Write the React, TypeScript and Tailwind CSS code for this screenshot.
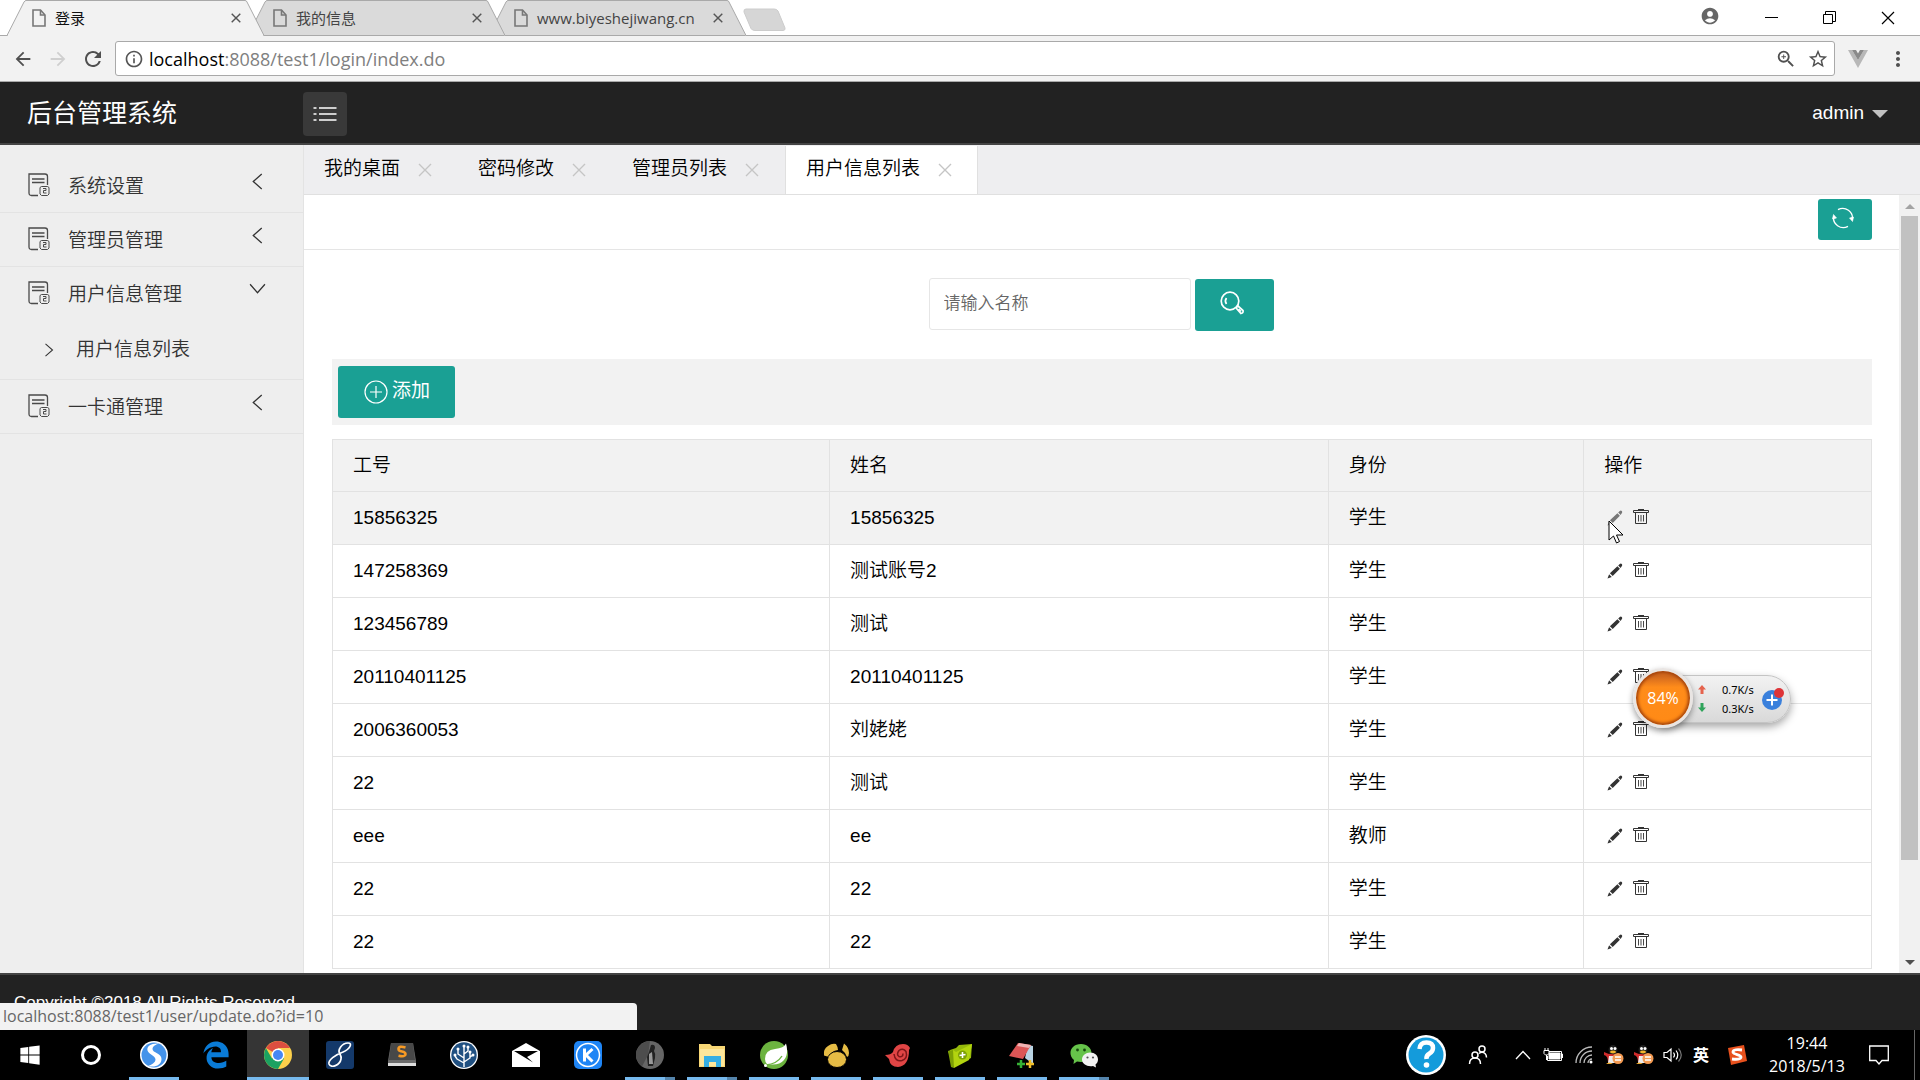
import React, { useState } from 'react';
import {
  MdAccountCircle,
  MdArrowBack,
  MdArrowForward,
  MdInfoOutline,
  MdMoreVert,
  MdRefresh,
  MdStarBorder,
  MdZoomIn,
} from 'react-icons/md';
import { FaEdgeLegacy, FaWindows } from 'react-icons/fa6';

interface User {
  no: string;
  name: string;
  role: string;
}

const users: User[] = [
  { no: '15856325', name: '15856325', role: '学生' },
  { no: '147258369', name: '测试账号2', role: '学生' },
  { no: '123456789', name: '测试', role: '学生' },
  { no: '20110401125', name: '20110401125', role: '学生' },
  { no: '2006360053', name: '刘姥姥', role: '学生' },
  { no: '22', name: '测试', role: '学生' },
  { no: 'eee', name: 'ee', role: '教师' },
  { no: '22', name: '22', role: '学生' },
  { no: '22', name: '22', role: '学生' },
];

const browserTabs = [
  { title: '登录', className: 'z-30' },
  { title: '我的信息', className: 'z-20 -ml-4' },
  { title: 'www.biyeshejiwang.cn', className: 'z-10 -ml-4' },
];

const pageTabs = ['我的桌面', '密码修改', '管理员列表', '用户信息列表'];

/* ---------- icons ---------- */

function PageIcon({ className }: { className?: string }) {
  return (
    <svg viewBox="0 0 14 18" className={className} fill="none" stroke="currentColor" strokeWidth="1.6">
      <path d="M1 1h7.500l4.500 5v11H1z" />
      <path d="M8.500 1v5H13" />
    </svg>
  );
}

function CloseIcon({ className, strokeWidth = 2 }: { className?: string; strokeWidth?: number }) {
  return (
    <svg viewBox="0 0 14 14" className={className} fill="none" stroke="currentColor" strokeWidth={strokeWidth}>
      <path d="M1 1l12 12M13 1L1 13" />
    </svg>
  );
}

function Chevron({ className }: { className?: string }) {
  return (
    <svg viewBox="0 0 16 16" className={className} fill="none" stroke="currentColor" strokeWidth="1.2">
      <path d="M12 1L4 8l8 7" />
    </svg>
  );
}

function MenuDocIcon() {
  return (
    <svg viewBox="0 0 22 24" className="h-6 w-[22px] shrink-0" fill="none" stroke="#4a4a4a" strokeWidth="1.3">
      <path d="M10 22.500H3.500Q1 22.500 1 20V1h16q2.500 0 2.500 2.500V12" />
      <path d="M4 6h12.500M4 9.500h12.500" />
      <path d="M12 14.500l1.500-1h6l1.500 1v6.500l-1.500 1.500h-6L12 21z" strokeWidth="1" />
      <path d="M15 15.500h3v2h-2.500v2.500h3" strokeWidth="1" />
    </svg>
  );
}

function RefreshIcon() {
  return (
    <svg viewBox="0 0 22 22" className="size-[22px]" fill="none" stroke="currentColor" strokeWidth="1.3">
      <path d="M6 2.600A9.800 9.800 0 0 1 20.300 13M16 19.400A9.800 9.800 0 0 1 1.700 9" />
      <path d="M17.500 11l3 3.500 1-4.500zM4.500 11l-3-3.500-1 4.500z" fill="currentColor" strokeWidth="0.6" />
    </svg>
  );
}

function SearchIcon() {
  return (
    <svg viewBox="0 0 24 24" className="size-6" fill="none" stroke="currentColor" strokeWidth="1.7">
      <circle cx="10" cy="10" r="8.800" />
      <path d="M6.500 13a5 5 0 0 1 0-6" />
      <path d="M16.500 16.500l1.500-1.500 5 4.500q.6 2.500-2 3l-4.500-5z" />
      <path d="M18.500 18l2.500 2.500" />
    </svg>
  );
}

function AddIcon() {
  return (
    <svg viewBox="0 0 24 24" className="size-6" fill="none" stroke="currentColor" strokeWidth="1.2">
      <circle cx="12" cy="12" r="11" />
      <path d="M12 6v12M6 12h12" />
    </svg>
  );
}

function PencilIcon() {
  return (
    <svg viewBox="0 0 16 16" className="size-4" fill="currentColor">
      <path d="M.5 15.500l1.600-4.300 2.700 2.700zM2.900 10.300l7.500-7 2.500 2.500-7.200 7.300zM11.200 2.500l1.600-1.500q1.200-.8 2 .1.900 1 .1 2L13.600 5z" />
    </svg>
  );
}

function TrashIcon() {
  return (
    <svg viewBox="0 0 16 16" className="size-4" fill="none" stroke="currentColor" strokeWidth="1">
      <path d="M5 .5h6M.5 1.500h15v2H.5zM2.500 4v10.500h11V4" />
      <path d="M5.500 6v6.500M8 6v6.500M10.500 6v6.500" strokeWidth="0.900" />
    </svg>
  );
}

/* ---------- browser chrome ---------- */

function BrowserTabs() {
  return (
    <div className="flex h-[35px] bg-white pl-[7px] font-['Open_Sans','Noto_Sans_CJK_SC',sans-serif] text-[15px] font-normal">
      {browserTabs.map((tab, i) => (
        <div key={tab.title} className={`relative flex h-9 w-[257px] shrink-0 items-center pr-[23px] pl-[25px] ${tab.className}`}>
          <svg viewBox="0 0 257 36" className="absolute inset-0 h-9 w-[257px]">
            <path
              d="M0 35.500L17 2q1-1.500 2-1.500h219q1.500 0 2 1.500l17 33.500"
              fill={i === 0 ? '#f2f2f2' : '#dadada'}
              stroke="#a9a9a9"
            />
            <path d="M1 35.500h255" stroke={i === 0 ? '#f2f2f2' : '#a9a9a9'} />
          </svg>
          <PageIcon className="relative h-[18px] w-[14px] shrink-0 text-[#777]" />
          <span className={`relative ml-[9px] flex-1 whitespace-nowrap ${i === 0 ? 'text-[#111]' : 'text-[#444]'}`}>{tab.title}</span>
          <button aria-label="关闭标签页" className="relative text-[#555]">
            <CloseIcon className="size-[10px]" />
          </button>
        </div>
      ))}
      <button aria-label="新标签页" className="mt-2 h-6 w-11 -translate-x-[3px]">
        <svg viewBox="0 0 44 24">
          <path d="M3 1h28q3 0 4 2l7 17q.5 2.500-2 2.500H12q-3 0-4-2L1 4Q.5 1 3 1z" fill="#d6d6d6" stroke="#ccc" />
        </svg>
      </button>
      <div className="ml-auto flex items-center">
        <MdAccountCircle className="mr-[45px] mb-1 size-5 text-[#666]" />
        <button aria-label="最小化" className="mr-[45px]">
          <svg viewBox="0 0 13 13" className="size-[13px]" stroke="#000">
            <path d="M0 6.500h13" />
          </svg>
        </button>
        <button aria-label="还原" className="mr-[45px]">
          <svg viewBox="0 0 13 13" className="size-[13px]" fill="none" stroke="#000">
            <path d="M.5 3.500h9v9h-9zM2.500 3V.5h10v10H10" />
          </svg>
        </button>
        <button aria-label="关闭" className="mr-[25px]">
          <CloseIcon className="size-[14px]" strokeWidth={1.2} />
        </button>
      </div>
    </div>
  );
}

function AddressBar() {
  return (
    <div className="flex h-[47px] items-center border-t border-b border-[#a9a9a9] bg-[#f2f2f2] pl-3 font-['Open_Sans',sans-serif] font-normal">
      <button aria-label="后退" className="text-[#505050]"><MdArrowBack className="size-[22px]" /></button>
      <button aria-label="前进" className="ml-[13px] text-[#cfcfcf]"><MdArrowForward className="size-[22px]" /></button>
      <button aria-label="重新加载" className="ml-3 text-[#505050]"><MdRefresh className="size-6" /></button>
      <div className="ml-[10px] flex h-[35px] flex-1 items-center rounded-[3px] border border-[#a9a9a9] bg-white pr-[5px] pl-2">
        <MdInfoOutline className="size-5 text-[#555]" />
        <div className="ml-[5px] flex-1 text-lg text-[#808080]">
          <span className="text-black">localhost</span>:8088/test1/login/index.do
        </div>
        <button aria-label="缩放" className="text-[#505050]"><MdZoomIn className="size-[22px]" /></button>
        <button aria-label="收藏" className="ml-[10px] text-[#505050]"><MdStarBorder className="size-[22px]" /></button>
      </div>
      <svg viewBox="0 0 20 18" className="ml-[13px] h-[18px] w-5">
        <path d="M0 0h4l6 10 6-10h4L10 18z" fill="#b8b8b8" />
        <path d="M4 0h4l2 3.500L12 0h4l-6 10z" fill="#8a8a8a" />
      </svg>
      <button aria-label="菜单" className="mr-[10px] ml-[18px] text-[#505050]"><MdMoreVert className="size-6" /></button>
    </div>
  );
}

/* ---------- admin page ---------- */

function Header() {
  return (
    <header className="flex h-[63px] shrink-0 items-center border-b-2 border-[#444] bg-[#222] pt-[2px] text-white">
      <h1 className="w-[303px] pl-[27px] text-[25px] font-normal">后台管理系统</h1>
      <button aria-label="展开菜单" className="flex size-11 items-center justify-center rounded bg-[#393939]">
        <svg viewBox="0 0 24 16" className="h-4 w-6" stroke="#fff" strokeWidth="1.6">
          <path d="M6 2h17.500M6 8h17.500M6 14h17.500M.5 2h3M.5 8h3M.5 14h3" />
        </svg>
      </button>
      <button className="mr-8 ml-auto flex items-center gap-2 text-[19px]">
        admin
        <span className="border-x-8 border-t-8 border-x-transparent border-t-[#c2c2c2]" />
      </button>
    </header>
  );
}

interface MenuItemProps {
  title: string;
  open?: boolean;
  children?: React.ReactNode;
}

function MenuItem({ title, open, children }: MenuItemProps) {
  return (
    <li className="border-b border-[#e3e3e3]">
      <button className="flex h-[53px] w-full items-center pr-[37px] pb-px pl-7 text-[19px] text-[#333]">
        <MenuDocIcon />
        <span className="mt-1 ml-[18px] flex-1 text-left">{title}</span>
        <Chevron className={open ? 'mb-[9px] size-[17px] -rotate-90' : 'mb-[7px] size-[17px]'} />
      </button>
      {children}
    </li>
  );
}

function Sidebar() {
  return (
    <nav className="w-[304px] shrink-0 border-r border-[#e3e3e3] bg-[#eee] pt-[14px]">
      <ul>
        <MenuItem title="系统设置" />
        <MenuItem title="管理员管理" />
        <MenuItem title="用户信息管理" open>
          <a href="#user-list" className="flex h-[59px] items-center pl-[42px] text-[19px] text-[#333]">
            <Chevron className="size-[14px] rotate-180" />
            <span className="mt-[2px] ml-5">用户信息列表</span>
          </a>
        </MenuItem>
        <MenuItem title="一卡通管理" />
      </ul>
    </nav>
  );
}

function PageTabs() {
  const [active, setActive] = useState('用户信息列表');

  return (
    <div className="flex h-[50px] shrink-0 border-b border-[#e0e0e0] bg-[#eeeef0] text-[19px]">
      {pageTabs.map((tab) => (
        <div
          key={tab}
          className={`flex items-center pr-[25px] pl-5 ${active === tab ? 'mt-px border-x border-[#e0e0e0] bg-white' : 'mr-px'}`}
        >
          <button onClick={() => setActive(tab)} className="mb-px">{tab}</button>
          <button aria-label={`关闭${tab}`} className="ml-[18px] text-[#c5c5c5]">
            <CloseIcon className="size-[14px]" strokeWidth={1.4} />
          </button>
        </div>
      ))}
    </div>
  );
}

function UserTable() {
  return (
    <table className="mt-[14px] w-full table-fixed border-collapse text-left text-[19px]">
      <colgroup>
        <col className="w-[32.300%]" />
        <col className="w-[32.400%]" />
        <col className="w-[16.600%]" />
        <col />
      </colgroup>
      <thead>
        <tr className="h-[52px] bg-[#f2f2f2]">
          {['工号', '姓名', '身份', '操作'].map((h) => (
            <th key={h} className="border border-[#e2e2e2] px-5 pt-[2px] font-[350]">{h}</th>
          ))}
        </tr>
      </thead>
      <tbody>
        {users.map((user, i) => (
          <tr key={i} className={`h-[53px] ${i === 0 ? 'bg-[#f2f2f2]' : ''}`}>
            <td className="border border-[#e2e2e2] px-5">{user.no}</td>
            <td className="border border-[#e2e2e2] px-5">{user.name}</td>
            <td className="border border-[#e2e2e2] px-5">{user.role}</td>
            <td className="border border-[#e2e2e2] px-[23px] pb-[3px]">
              <div className="flex items-center gap-[10px] text-[#333]">
                <a href="#edit" aria-label="编辑" className={i === 0 ? 'mt-[2px] text-[#777]' : 'mt-[2px]'}><PencilIcon /></a>
                <a href="#delete" aria-label="删除"><TrashIcon /></a>
              </div>
            </td>
          </tr>
        ))}
      </tbody>
    </table>
  );
}

function Content() {
  return (
    <div className="min-h-0 min-w-0 flex-1 overflow-hidden bg-white">
      <div className="flex h-[55px] justify-end border-b border-[#e5e5e5] pt-1 pr-[27px]">
        <button aria-label="刷新" className="flex h-[41px] w-[54px] items-center justify-center rounded-[3px] bg-[#1aa094] pr-1 pb-[3px] text-white">
          <RefreshIcon />
        </button>
      </div>
      <div className="pr-[27px] pl-7">
        <form className="mt-7 flex items-start justify-center gap-1 pr-[2px]" onSubmit={(e) => e.preventDefault()}>
          <input
            type="text"
            aria-label="名称"
            placeholder="请输入名称"
            className="h-[52px] w-[262px] rounded-[3px] border border-[#e6e6e6] px-[14px] text-[17px] outline-none placeholder:text-[#666]"
          />
          <button aria-label="搜索" className="mt-px flex h-[52px] w-[79px] items-center justify-center rounded-[3px] bg-[#1aa094] pr-1 pb-1 text-white">
            <SearchIcon />
          </button>
        </form>
        <div className="mt-7 flex h-[66px] items-center bg-[#f2f2f2] px-[6px]">
          <button className="flex h-[52px] items-center gap-1 rounded-[3px] bg-[#1aa094] pr-[25px] pb-px pl-[26px] text-[19px] font-normal text-white">
            <AddIcon />
            添加
          </button>
        </div>
        <UserTable />
      </div>
    </div>
  );
}

function ScrollBar() {
  return (
    <div className="flex w-[21px] shrink-0 flex-col items-center bg-[#f1f1f1]">
      <span className="mt-[9px] border-x-[5px] border-b-[5px] border-x-transparent border-b-[#a3a3a3]" />
      <div className="mt-[7px] w-[17px] flex-43 bg-[#c1c1c1]" />
      <div className="flex flex-7 flex-col justify-end pb-2">
        <span className="border-x-[5px] border-t-[5px] border-x-transparent border-t-[#505050]" />
      </div>
    </div>
  );
}

/* Floating memory / network meter */
function SpeedWidget() {
  return (
    <div className="absolute top-[668px] right-[129px] z-20 flex items-center font-normal">
      <div className="z-10 flex size-[60px] items-center justify-center rounded-full border-[3px] border-[#e9e5e3] bg-linear-to-b from-[#d2691e] from-10% via-[#ff8c1a] via-30% to-[#ff8a15] font-['Open_Sans',sans-serif] text-base text-white shadow-[0_3px_6px_rgba(0,0,0,0.4),inset_0_0_3px_2px_#a4430c]">
        84%
      </div>
      <div className="mt-[2px] -ml-8 flex h-12 w-[130px] items-center rounded-r-full border border-[#c4c4c4] bg-linear-to-b from-[#f2f2f2] to-[#d9d9d9] pl-9 shadow-[0_4px_8px_rgba(0,0,0,0.35)]">
        <svg viewBox="0 0 8 30" className="h-[30px] w-2">
          <path d="M4 1l4 4.500H5.500V10h-3V5.500H0z" fill="#e5634d" />
          <path d="M4 28l4-4.500H5.500V19h-3v4.500H0z" fill="#2fa35a" />
        </svg>
        <div className="ml-4 font-['Noto_Sans',sans-serif] text-[11px] leading-[19px] text-black">
          <div>0.7K/s</div>
          <div>0.3K/s</div>
        </div>
        <svg viewBox="0 0 26 26" className="ml-[6px] size-[26px] shrink-0">
          <circle cx="12" cy="14" r="10" fill="#3a80dc" />
          <path d="M12 8.500v11M6.500 14h11" stroke="#fff" strokeWidth="2" />
          <circle cx="19" cy="7" r="5" fill="#de3438" />
        </svg>
      </div>
    </div>
  );
}

/* ---------- taskbar ---------- */

const apps = [
  {
    name: 'Sogou',
    state: 'run',
    icon: (
      <>
        <circle cx="14" cy="14" r="14" fill="#fff" />
        <circle cx="14" cy="14" r="12.500" fill="#4493ea" />
        <path d="M19 2.500C11 2 6.500 5 7.500 9.500c1 4 8 5 8 9 0 3-4 5.500-7.500 6.500 7 2 13.500-1 13.500-7 0-6-9-6-9-10 0-3 3.500-4.500 6.500-5.500z" fill="#fff" />
      </>
    ),
  },
  { name: 'Edge', state: '', icon: <FaEdgeLegacy size={28} color="#0a7bd6" /> },
  {
    name: 'Chrome',
    state: 'active',
    icon: (
      <>
        <circle cx="14" cy="14" r="14" fill="#fcd04b" />
        <path d="M14 14L1.900 7A14 14 0 0 1 26.100 7H14z" fill="#dd4f40" />
        <path d="M14 14L8 17.500 1.900 7A14 14 0 0 0 14 28l6-10.500z" fill="#1ba261" />
        <circle cx="14" cy="14" r="6.500" fill="#fff" />
        <circle cx="14" cy="14" r="5" fill="#4587f3" />
      </>
    ),
  },
  {
    name: 'Navicat',
    state: '',
    icon: (
      <>
        <rect width="28" height="28" rx="3" fill="#14396a" />
        <path d="M14 13C11 9 16 2 22 2c5 0 2 6-5 9-8 3-15 8-14 12 2 5 11 1 12-5 .5-2 0-3-1-5" fill="none" stroke="#fff" strokeWidth="1.700" />
      </>
    ),
  },
  {
    name: 'Sublime',
    state: '',
    icon: (
      <>
        <path d="M3 2h22l3 18v5H0v-5z" fill="#6b6b6b" />
        <path d="M3 2h22l2 17H1z" fill="#484848" />
        <path d="M0 22h28v3H0z" fill="#ddd" />
        <path d="M17.500 6.500q-7-2-7 1.500 0 2 3.500 2.500 3.500.7 3.500 2.700 0 3-7 1.500" fill="none" stroke="#f79a24" strokeWidth="2.600" />
      </>
    ),
  },
  {
    name: 'SourceTree',
    state: '',
    icon: (
      <>
        <circle cx="14" cy="14" r="14" fill="#fff" />
        <circle cx="14" cy="14" r="12.700" fill="#205081" />
        <path d="M14 26V5M14 21l6-4v-5M14 17l-6-4V8M14 13l4-3V6M14 22l-7-4-2-3M20 16l3-2" fill="none" stroke="#fff" strokeWidth="1.400" />
        <g fill="#fff">
          <circle cx="14" cy="5" r="1.500" /><circle cx="20" cy="11" r="1.500" /><circle cx="8" cy="8" r="1.500" />
          <circle cx="18" cy="6" r="1.500" /><circle cx="5" cy="14" r="1.500" /><circle cx="23" cy="14" r="1.500" />
        </g>
      </>
    ),
  },
  {
    name: 'Mail',
    state: '',
    icon: (
      <>
        <path d="M0 10L14 2l14 8v16H0z" fill="#fff" />
        <path d="M2 10h24L15 16l6 5.500z" fill="#000" />
      </>
    ),
  },
  {
    name: 'KuGou',
    state: '',
    icon: (
      <>
        <rect width="28" height="28" rx="5" fill="#1f85f5" />
        <circle cx="14" cy="14" r="11.500" fill="none" stroke="#fff" strokeWidth="1.500" />
        <path d="M10.500 7.500v13M18.500 8l-6.500 6 6.500 6.500" fill="none" stroke="#fff" strokeWidth="3" />
      </>
    ),
  },
  {
    name: 'Album',
    state: 'stack',
    icon: (
      <>
        <circle cx="14" cy="14" r="14" fill="#666" />
        <path d="M14 0a14 14 0 0 0-8 25.500L12 14z" fill="#4d4d4d" />
        <path d="M15 4q4-1 4 3l-1 3q2 3 1 7l-2 8h-5l-1-9 2-5z" fill="#222" />
        <path d="M13 13l3-2 1 12h-4z" fill="#999" />
      </>
    ),
  },
  {
    name: 'Explorer',
    state: 'stack',
    icon: (
      <>
        <path d="M1 3h11l2 2h13v21H1z" fill="#f8d775" />
        <path d="M2 8h24v17H2z" fill="#fde69b" />
        <path d="M6 15h17v11h-5v-5h-7v5H6z" fill="#35aee4" />
      </>
    ),
  },
  {
    name: 'Spring',
    state: 'run',
    icon: (
      <>
        <circle cx="14" cy="14" r="14" fill="#6cb33f" />
        <path d="M26 2.500Q24 7 15 8 5 9 5 18q0 3 2 5 12 2 17-4 5-6 2-16.500z" fill="#fff" />
        <path d="M6 24q11-1 16-9" fill="none" stroke="#6cb33f" strokeWidth="1.400" />
        <circle cx="5.500" cy="24.500" r="1.500" fill="#fff" />
      </>
    ),
  },
  {
    name: 'Navicat Paw',
    state: 'run',
    icon: (
      <>
        <path d="M2 14.500Q1 8 6 5q4-3 8-2 2 3 2 6-7 1-9 7zM20 9l2-6.500q5 4 5 9.500 0 3-2 4-1-4-5-7z" fill="#e6bc45" />
        <ellipse cx="15" cy="18.500" rx="9.500" ry="8" fill="#e6bc45" stroke="#000" />
      </>
    ),
  },
  {
    name: 'Shell',
    state: 'run',
    icon: (
      <>
        <path d="M1 14q6 0 8-3 2-8 10-8 5 0 7 4l-1 2q0 16-11 17Q6 26 5 18z" fill="#e04545" />
        <path d="M10 13q1 8 8 6.500 6-2 4-9-3-4-7-1-3 4 0 6 4 1 4-3" fill="none" stroke="#7d1518" strokeWidth="1.500" />
      </>
    ),
  },
  {
    name: 'Package',
    state: 'run',
    icon: (
      <>
        <path d="M4 9l6-2 3-3 13-1-1 14-17 9z" fill="#95b90b" />
        <path d="M2 10l5-1 3 2 16-8-3 16-15 8z" fill="#b2d40f" />
        <path d="M2 10l5-1 1 18-3-1z" fill="#7da005" />
        <circle cx="16.500" cy="14" r="4.500" fill="#7da005" />
        <path d="M16.500 11v6M13.500 14.500l6-1" stroke="#fff" strokeWidth="1.600" />
      </>
    ),
  },
  {
    name: 'Notepad',
    state: 'run',
    icon: (
      <>
        <path d="M20 4l5 1v18l-8-6z" fill="#b9d4e4" />
        <path d="M10 2l13 2-8 14L1 15z" fill="#dc5656" />
        <path d="M11 2l12 2-2 3-12-2z" fill="#f1b3b3" />
        <path d="M13 19v8M9 23h8" stroke="#35b135" strokeWidth="2.500" />
        <path d="M22 19v8M18 23h8" stroke="#efbd2a" strokeWidth="2.500" />
      </>
    ),
  },
  {
    name: 'WeChat',
    state: 'stack',
    icon: (
      <>
        <path d="M11 3c6 0 10.500 4 10.500 9s-5 9-10.500 9l-4-.5L3.500 23l.5-4C-3 13 1 3 11 3z" fill="#66c34a" />
        <circle cx="7.500" cy="9" r="1.400" fill="#174a10" /><circle cx="14.500" cy="9" r="1.400" fill="#174a10" />
        <path d="M20 11.500c5 0 8 3 8 7 0 2-1 4-2.500 5l.5 3-3-1.500C17 26 12 23 12 18.500c0-4 4-7 8-7z" fill="#f2f2f2" />
        <circle cx="17.500" cy="16.500" r="1.100" fill="#555" /><circle cx="23" cy="16.500" r="1.100" fill="#555" />
      </>
    ),
  },
];

function PenguinIcon() {
  return (
    <svg viewBox="0 0 20 20" className="size-5">
      <ellipse cx="9" cy="5" rx="4.500" ry="5" fill="#1c1c1c" />
      <circle cx="7.500" cy="3.500" r="1.500" fill="#fff" /><circle cx="11" cy="3.500" r="1.500" fill="#fff" />
      <ellipse cx="9" cy="7" rx="3" ry="1.400" fill="#f2b42b" />
      <path d="M0 7q5 3 13 2l-1 8H4Q4 11 0 10z" fill="#cf2b2b" />
      <path d="M5 11h6v7H4z" fill="#eee" />
      <path d="M2 19q3-3 7 0z" fill="#efa726" />
      <circle cx="14" cy="13.500" r="5.500" fill="#f39a52" />
      <path d="M11 12h6M11 15h6" stroke="#fff" strokeWidth="1.300" />
    </svg>
  );
}

function Taskbar() {
  return (
    <div className="flex h-[50px] shrink-0 items-center bg-black font-['Open_Sans','Noto_Sans_CJK_SC',sans-serif] font-normal text-white">
      <button aria-label="开始" className="flex w-[60px] justify-center"><FaWindows className="size-[22px]" /></button>
      <button aria-label="Cortana" className="mr-[2px] flex w-[61px] justify-center">
        <span className="size-5 rounded-full border-[3px] border-white" />
      </button>
      {apps.map((app) => (
        <button
          key={app.name}
          aria-label={app.name}
          className={`relative flex h-full w-[62px] items-center justify-center ${app.state === 'active' ? 'bg-[#353535]' : ''}`}
        >
          <svg viewBox="0 0 28 28" className="size-7">{app.icon}</svg>
          {app.state !== '' && (
            <span className={`absolute bottom-0 h-[3px] bg-[#76b9ed] ${app.state === 'active' ? 'inset-x-0' : 'inset-x-[6px]'}`} />
          )}
          {app.state === 'stack' && <span className="absolute right-[6px] bottom-0 h-[3px] w-[10px] bg-[#5484ab]" />}
        </button>
      ))}

      <div className="ml-auto flex h-full items-center">
        <svg viewBox="0 0 40 40" className="mr-[22px] size-10">
          <circle cx="20" cy="20" r="20" fill="#fff" />
          <circle cx="20" cy="20" r="17.500" fill="#149bdb" />
          <path d="M13.500 14q.5-6.500 7-6.500t6.500 5.500q0 3.500-3.500 5.500t-3 5.500" fill="none" stroke="#fff" strokeWidth="4.500" />
          <circle cx="20.500" cy="30" r="2.800" fill="#fff" />
        </svg>
        <svg viewBox="0 0 20 20" className="mr-[27px] size-5" fill="none" stroke="#fff" strokeWidth="1.500">
          <circle cx="7" cy="10" r="3" /><circle cx="14" cy="4" r="3" />
          <path d="M1.500 19q0-6 5.500-6t5.500 6M11 8.500q3-2.500 6 0 1.500 1.500 1.500 4" />
        </svg>
        <svg viewBox="0 0 16 10" className="mr-3 h-[10px] w-4" fill="none" stroke="#fff" strokeWidth="1.300"><path d="M1 9l7-7.500L15 9" /></svg>
        <svg viewBox="0 0 20 16" className="mr-3 h-4 w-5" stroke="#fff">
          <path d="M6 4.500h12.500v9H4.500V9" fill="none" /><path d="M6 6h11v6H6z" fill="#fff" />
          <path d="M18.500 7h1v4M1 3.500h5v3L4.500 8h-2L1 6.500zM2 1v2.500M5 1v2.500M3.500 8v5" fill="none" />
        </svg>
        <svg viewBox="0 0 18 18" className="mr-[11px] size-[18px]" fill="none" stroke="#bbb" strokeWidth="1.300">
          <path d="M1 17A16 16 0 0 1 17 1M5 17A12 12 0 0 1 17 5M9 17a8 8 0 0 1 8-8M13 17a4 4 0 0 1 4-4" />
          <circle cx="16" cy="16" r="1.500" fill="#fff" stroke="none" />
        </svg>
        <span className="mr-[10px]"><PenguinIcon /></span>
        <span className="mr-[9px]"><PenguinIcon /></span>
        <svg viewBox="0 0 20 16" className="mr-[10px] h-4 w-5" fill="none" stroke="#fff" strokeWidth="1.200">
          <path d="M1 5.500h3L8 2v12l-4-3.500H1zM10.500 5.500q2 2.500 0 5M13 3.500q3.500 4.500 0 9" />
          <path d="M15.500 1.500q5.500 6.500 0 13" stroke="#777" />
        </svg>
        <span className="mr-[18px] text-base font-bold">英</span>
        <svg viewBox="0 0 20 20" className="mr-[21px] size-5">
          <path d="M1 3l16-3 3 16-16 4z" fill="#e8511d" />
          <path d="M15 5q-8-1-9 1.500c-1 3 8 3 8 5.500s-5 2.500-9 2" fill="none" stroke="#fff" strokeWidth="2.800" />
        </svg>
        <div className="w-[78px] text-center text-base leading-[23px]">
          <div>19:44</div>
          <div>2018/5/13</div>
        </div>
        <svg viewBox="0 0 20 20" className="mr-[25px] ml-[23px] size-5" fill="none" stroke="#fff" strokeWidth="1.300">
          <path d="M.7 1h18.600v14.500H13L10 19l-3-3.500H.7z" />
        </svg>
        <div className="mr-[5px] h-full w-px bg-[#666]" />
      </div>
    </div>
  );
}

export default function App() {
  return (
    <div className="relative flex h-screen flex-col overflow-hidden bg-white font-['Liberation_Sans','Noto_Sans_CJK_SC',sans-serif] font-[350] text-black">
      <BrowserTabs />
      <AddressBar />
      <Header />
      <div className="flex min-h-0 flex-1">
        <Sidebar />
        <main className="flex min-w-0 flex-1 flex-col">
          <PageTabs />
          <div className="flex min-h-0 flex-1">
            <Content />
            <ScrollBar />
          </div>
        </main>
      </div>
      <footer className="relative h-[57px] shrink-0 border-t-2 border-[#444] bg-[#222] pt-4 pl-[14px] text-[17px] leading-6 text-white">
        Copyright ©2018 All Rights Reserved.
        <div className="absolute bottom-0 left-0 h-[27px] w-[637px] rounded-tr bg-[#f2f2f2] pl-[3px] font-['Open_Sans',sans-serif] text-base leading-[26px] font-normal text-[#666]">
          localhost:8088/test1/user/update.do?id=10
        </div>
      </footer>
      <Taskbar />

      <SpeedWidget />
      <svg viewBox="0 0 16 24" className="absolute top-[520px] right-[296px] z-20 h-6 w-4">
        <path d="M1 1v19l4.500-4 3 7 3-1.500-3-6.500H15z" fill="#fff" stroke="#000" />
      </svg>
    </div>
  );
}
